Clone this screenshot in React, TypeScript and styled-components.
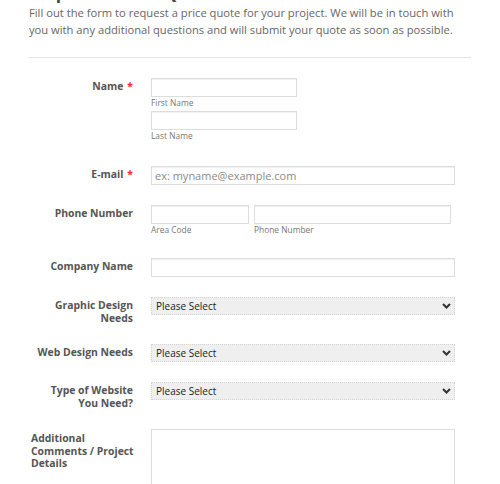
import React from 'react';
import styled, { createGlobalStyle } from 'styled-components';

const GlobalStyle = createGlobalStyle`
  html, body {
    margin: 0;
    padding: 0;
    background: #fff;
    font-family: "Open Sans", "Noto Sans", sans-serif;
    overflow: hidden;
  }
`;

const Page = styled.div`
  width: 442px;
  margin-left: 29px;
`;

const Title = styled.h2`
  margin: -17px 0 0 0;
  font-size: 17px;
  line-height: 20px;
  font-weight: 700;
  color: #444;
`;

const Intro = styled.p`
  margin: 1px 0 0 0;
  font-size: 11.2px;
  line-height: 17px;
  color: #666;
`;

const Divider = styled.hr`
  border: none;
  border-top: 1px solid #e4e4e4;
  margin: 19px 0 10px 0;
`;

const Row = styled.div<{ $bottom?: number }>`
  display: grid;
  grid-template-columns: 104px 1fr;
  column-gap: 18px;
  align-items: start;
  padding: 10px 0 ${(p) => p.$bottom ?? 10}px 0;
`;

const Label = styled.label<{ $left?: boolean }>`
  display: block;
  font-size: 10.4px;
  line-height: 12.5px;
  font-weight: 700;
  color: #555;
  text-align: ${(p) => (p.$left ? 'left' : 'right')};
  padding: ${(p) => (p.$left ? '3px 0 0 2px' : '2px 0 0 0')};
  margin-right: ${(p) => (p.$left ? '-10px' : '0')};
`;

const Req = styled.span`
  color: #f0262c;
  margin-left: 4px;
`;

const Field = styled.div`
  display: flex;
  flex-direction: column;
`;

const Pair = styled.div`
  display: flex;
  gap: 5px;
`;

const Input = styled.input<{ $w?: number }>`
  display: block;
  box-sizing: border-box;
  width: ${(p) => (p.$w ? `${p.$w}px` : '304px')};
  height: 19px;
  margin: 0;
  border: 1px solid #ddd;
  box-shadow: inset 0 1px 1px #f0f0f0;
  padding: 0 3px;
  font-family: inherit;
  font-size: 11px;
  color: #444;
  &::placeholder {
    color: #8a8a8a;
  }
`;

const Sub = styled.span`
  font-size: 8.4px;
  line-height: 12px;
  color: #777;
  & + input {
    margin-top: 2px;
  }
`;

const SelectWrap = styled.div`
  position: relative;
  width: 304px;
  height: 18px;
`;

const Select = styled.select`
  appearance: none;
  display: block;
  box-sizing: border-box;
  width: 100%;
  height: 18px;
  margin: 0;
  border: 1px dotted #d4d4d4;
  background: #efefef;
  padding: 0 4px;
  font-family: inherit;
  font-size: 10px;
  font-weight: 500;
  color: #222;
`;

const Arrow = styled.svg`
  position: absolute;
  right: 4px;
  top: 6px;
  pointer-events: none;
`;

const Area = styled.textarea`
  display: block;
  box-sizing: border-box;
  width: 304px;
  height: 90px;
  margin: 0;
  border: 1px solid #ddd;
  resize: none;
`;

const Dropdown: React.FC = () => (
  <SelectWrap>
    <Select defaultValue="">
      <option value="">Please Select</option>
    </Select>
    <Arrow width="9" height="6" viewBox="0 0 9 6">
      <path d="M1 1 L4.5 4.5 L8 1" fill="none" stroke="#333" strokeWidth="2" />
    </Arrow>
  </SelectWrap>
);

export default function App() {
  return (
    <>
      <GlobalStyle />
      <Page>
        <Title>Request a Price Quote</Title>
        <Intro>
          Fill out the form to request a price quote for your project. We will be in touch with
          you with any additional questions and will submit your quote as soon as possible.
        </Intro>
        <Divider />

        <Row $bottom={14}>
          <Label>
            Name<Req>*</Req>
          </Label>
          <Field>
            <Input $w={146} />
            <Sub>First Name</Sub>
            <Input $w={146} />
            <Sub>Last Name</Sub>
          </Field>
        </Row>

        <Row>
          <Label>
            E-mail<Req>*</Req>
          </Label>
          <Input placeholder="ex: myname@example.com" />
        </Row>

        <Row $bottom={12}>
          <Label>Phone Number</Label>
          <Pair>
            <Field>
              <Input $w={98} />
              <Sub>Area Code</Sub>
            </Field>
            <Field>
              <Input $w={197} />
              <Sub>Phone Number</Sub>
            </Field>
          </Pair>
        </Row>

        <Row>
          <Label>Company Name</Label>
          <Input />
        </Row>

        <Row>
          <Label>Graphic Design Needs</Label>
          <Dropdown />
        </Row>

        <Row>
          <Label>Web Design Needs</Label>
          <Dropdown />
        </Row>

        <Row>
          <Label>Type of Website You Need?</Label>
          <Dropdown />
        </Row>

        <Row>
          <Label $left>Additional Comments / Project Details</Label>
          <Area />
        </Row>
      </Page>
    </>
  );
}
